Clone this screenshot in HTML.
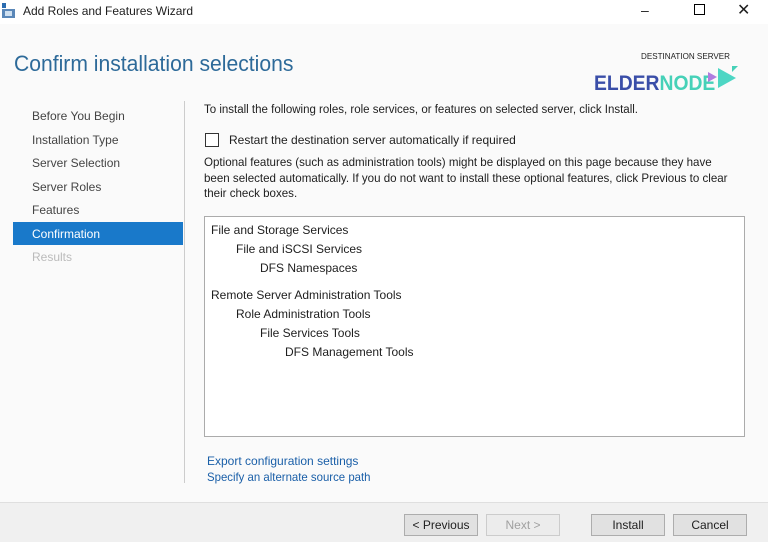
<!DOCTYPE html>
<html><head><style>
body{margin:0;width:768px;height:541px;position:relative;overflow:hidden;background:#fff;font-family:"Liberation Sans",sans-serif;font-size:12px;color:#1e1e1e}
.a{position:absolute;white-space:nowrap}
.nav{position:absolute;left:32px;font-size:12px;color:#444}
.btn{position:absolute;top:514px;width:72px;height:20px;border:1px solid #adadad;background:#e1e1e1;text-align:center;line-height:20px;font-size:12px}
</style></head><body>
<div class="a" style="left:0;top:0;width:768px;height:24px;background:#fff"></div>
<svg class="a" style="left:2px;top:3px" width="14" height="16"><rect x="0" y="0" width="4" height="5" fill="#2b6cb0"/><rect x="0" y="6" width="13" height="9" fill="#5a87b8"/><rect x="3" y="8" width="7" height="5" fill="#cfe0f0"/></svg>
<div class="a" style="left:23px;top:4px;font-size:12px">Add Roles and Features Wizard</div>
<div class="a" style="left:641px;top:2px;font-size:14px">&#8211;</div>
<div class="a" style="left:694px;top:4px;width:9px;height:9px;border:1px solid #000"></div>
<div class="a" style="left:737px;top:0px;font-size:16px">&#10005;</div>
<div class="a" style="left:0;top:24px;width:768px;height:478px;background:#fafafa"></div>
<div class="a" style="left:14px;top:51px;font-size:22px;color:#2d6a99;transform:scaleX(0.96);transform-origin:left">Confirm installation selections</div>
<div class="a" style="left:641px;top:51px;font-size:8.5px;transform:scaleX(0.95);transform-origin:left">DESTINATION SERVER</div>
<div class="a" style="left:594px;top:72px;font-size:21px;font-weight:bold;transform:scaleX(0.92);transform-origin:left"><span style="color:#3a4ea8">ELDER</span><span style="color:#46d1b8">NODE</span></div>
<svg class="a" style="left:704px;top:64px" width="38" height="32"><polygon points="14,4 14,24 32,14" fill="#4dd6c4"/><polygon points="4,8 4,18 13,13" fill="#b07de0"/><polygon points="28,2 34,2 28,8" fill="#46d1b8"/></svg>
<div class="nav" style="top:109px">Before You Begin</div>
<div class="nav" style="top:133px">Installation Type</div>
<div class="nav" style="top:156px">Server Selection</div>
<div class="nav" style="top:180px">Server Roles</div>
<div class="nav" style="top:203px">Features</div>
<div class="a" style="left:13px;top:222px;width:170px;height:23px;background:#1979ca"></div>
<div class="nav" style="top:227px;color:#fff">Confirmation</div>
<div class="nav" style="top:250px;color:#bbb">Results</div>
<div class="a" style="left:184px;top:101px;width:1px;height:382px;background:#ccc"></div>
<div class="a" style="left:204px;top:104px;font-size:11.5px">To install the following roles, role services, or features on selected server, click Install.</div>
<div class="a" style="left:205px;top:133px;width:12px;height:12px;border:1px solid #333;background:#fff"></div>
<div class="a" style="left:229px;top:133px;font-size:12px">Restart the destination server automatically if required</div>
<div class="a" style="left:204px;top:155px;font-size:11.8px;line-height:15.5px;transform:scaleX(0.98);transform-origin:left">Optional features (such as administration tools) might be displayed on this page because they have<br>been selected automatically. If you do not want to install these optional features, click Previous to clear<br>their check boxes.</div>
<div class="a" style="left:204px;top:216px;width:539px;height:219px;border:1px solid #ababab;background:#fff"></div>
<div class="a" style="left:211px;top:223px">File and Storage Services</div>
<div class="a" style="left:236px;top:242px">File and iSCSI Services</div>
<div class="a" style="left:260px;top:261px">DFS Namespaces</div>
<div class="a" style="left:211px;top:288px">Remote Server Administration Tools</div>
<div class="a" style="left:236px;top:307px">Role Administration Tools</div>
<div class="a" style="left:260px;top:326px">File Services Tools</div>
<div class="a" style="left:285px;top:345px">DFS Management Tools</div>
<div class="a" style="left:207px;top:454px;color:#1a5fa8">Export configuration settings</div>
<div class="a" style="left:207px;top:470px;color:#1a5fa8;transform:scaleX(0.95);transform-origin:left">Specify an alternate source path</div>
<div class="a" style="left:0;top:502px;width:768px;height:39px;background:#f0f0f0;border-top:1px solid #dfdfdf"></div>
<div class="btn" style="left:404px">&lt; Previous</div>
<div class="btn" style="left:486px;color:#a0a0a0;border-color:#ccc;background:#ececec">Next &gt;</div>
<div class="btn" style="left:591px">Install</div>
<div class="btn" style="left:673px">Cancel</div>
</body></html>
